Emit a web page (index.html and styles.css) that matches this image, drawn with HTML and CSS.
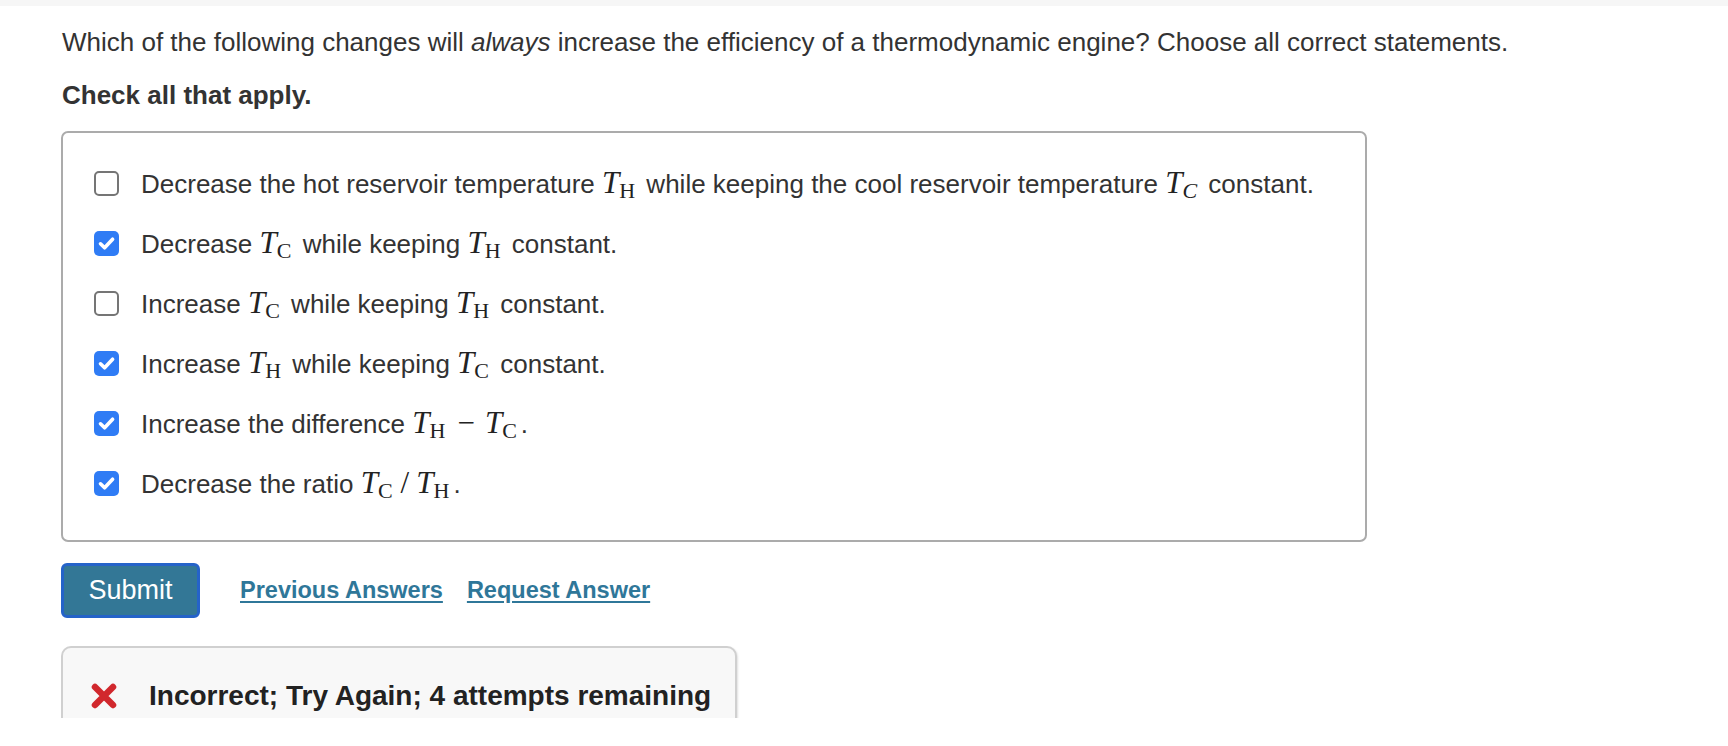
FILE: index.html
```html
<!DOCTYPE html>
<html lang="en">
<head>
<meta charset="utf-8">
<title>Thermodynamic engine efficiency</title>
<link rel="stylesheet" href="styles.css">
</head>
<body>
<div class="topbar"></div>
<main class="content">
  <p class="question">Which of the following changes will <em>always</em> increase the efficiency of a thermodynamic engine? Choose all correct statements.</p>
  <p class="instr">Check all that apply.</p>
  <div class="options">
    <label class="option">
      <span class="cb"></span>
      <span class="txt">Decrease the hot reservoir temperature <span class="m"><i>T</i><sub>H</sub></span> while keeping the cool reservoir temperature <span class="m"><i>T</i><sub><i>C</i></sub></span> constant.</span>
    </label>
    <label class="option">
      <span class="cb checked"><svg viewBox="0 0 25 25"><path d="M6.5 12.8 L10.6 16.8 L18.6 8.2"/></svg></span>
      <span class="txt">Decrease <span class="m"><i>T</i><sub>C</sub></span> while keeping <span class="m"><i>T</i><sub>H</sub></span> constant.</span>
    </label>
    <label class="option">
      <span class="cb"></span>
      <span class="txt">Increase <span class="m"><i>T</i><sub>C</sub></span> while keeping <span class="m"><i>T</i><sub>H</sub></span> constant.</span>
    </label>
    <label class="option">
      <span class="cb checked"><svg viewBox="0 0 25 25"><path d="M6.5 12.8 L10.6 16.8 L18.6 8.2"/></svg></span>
      <span class="txt">Increase <span class="m"><i>T</i><sub>H</sub></span> while keeping <span class="m"><i>T</i><sub>C</sub></span> constant.</span>
    </label>
    <label class="option">
      <span class="cb checked"><svg viewBox="0 0 25 25"><path d="M6.5 12.8 L10.6 16.8 L18.6 8.2"/></svg></span>
      <span class="txt">Increase the difference <span class="m"><i>T</i><sub>H</sub><span class="op">&minus;</span><i>T</i><sub>C</sub></span>.</span>
    </label>
    <label class="option">
      <span class="cb checked"><svg viewBox="0 0 25 25"><path d="M6.5 12.8 L10.6 16.8 L18.6 8.2"/></svg></span>
      <span class="txt">Decrease the ratio <span class="m"><i>T</i><sub>C</sub><span class="slash">/</span><i>T</i><sub>H</sub></span>.</span>
    </label>
  </div>
  <div class="actions">
    <button class="submit" type="button">Submit</button>
    <a class="link" href="#">Previous Answers</a>
    <a class="link" href="#">Request Answer</a>
  </div>
  <div class="feedback-clip">
    <div class="feedback">
      <svg class="xicon" viewBox="0 0 26 26"><path d="M4 4 L22 22 M22 4 L4 22"/></svg>
      <span class="fb-text">Incorrect; Try Again; 4 attempts remaining</span>
    </div>
  </div>
</main>
</body>
</html>
```

FILE: styles.css
```css
html, body {
  margin: 0;
  padding: 0;
  background: #ffffff;
}
body {
  font-family: "Liberation Sans", Arial, Helvetica, sans-serif;
  color: #333333;
}
.topbar {
  height: 6px;
  background: #f6f6f6;
}
.content {
  padding-left: 61px;
}
.question {
  margin: 20px 0 0 1px;
  font-size: 26px;
  line-height: 32px;
}
.question em {
  font-style: italic;
}
.instr {
  margin: 21px 0 0 1px;
  font-size: 26px;
  line-height: 32px;
  font-weight: bold;
}
.options {
  margin-top: 20px;
  width: 1306px;
  box-sizing: border-box;
  border: 2px solid #ababab;
  border-radius: 7px;
  padding: 35px 0 42px 31px;
  display: flex;
  flex-direction: column;
  gap: 30px;
}
.option {
  display: flex;
  align-items: center;
  height: 30px;
  font-size: 26px;
  line-height: 30px;
}
.cb {
  flex: none;
  width: 25px;
  height: 25px;
  box-sizing: border-box;
  border: 2px solid #757575;
  border-radius: 5px;
  background: #fff;
  margin-right: 22px;
  display: flex;
  align-items: center;
  justify-content: center;
}
.cb.checked {
  border: none;
  background: #2f7cf5;
}
.cb svg {
  width: 25px;
  height: 25px;
}
.cb path {
  fill: none;
  stroke: #fff;
  stroke-width: 3.6;
  stroke-linecap: round;
  stroke-linejoin: round;
}
.txt {
  white-space: nowrap;
}
.m {
  font-family: "Liberation Serif", "Times New Roman", serif;
  font-size: 31px;
  color: #222;
  white-space: nowrap;
  margin-right: 2px;
}
.m i {
  font-style: italic;
  padding-right: 2px;
}
.m sub {
  font-size: 22px;
  vertical-align: -5px;
  line-height: 0;
  margin-left: -2px;
  margin-right: 2px;
}
.m sub i {
  font-style: italic;
  padding-right: 0;
}
.op {
  margin: 0 10px;
}
.slash {
  margin: 0 7px 0 6px;
}
.actions {
  margin-top: 21px;
  display: flex;
  align-items: center;
}
.submit {
  width: 139px;
  height: 55px;
  box-sizing: border-box;
  background: #337796;
  border: 3px solid #2563c9;
  border-radius: 6px;
  color: #ffffff;
  font-family: "Liberation Sans", Arial, sans-serif;
  font-size: 27px;
  padding: 0;
  margin-right: 40px;
}
.link {
  font-size: 23.5px;
  font-weight: bold;
  color: #2f7799;
  text-decoration: underline;
  text-underline-offset: 3px;
  text-decoration-thickness: 2px;
  margin-right: 24px;
}
.feedback-clip {
  margin-top: 28px;
  height: 72px;
  overflow: hidden;
  width: 690px;
}
.feedback {
  width: 676px;
  height: 120px;
  box-sizing: border-box;
  background: #f8f8f8;
  border: 2px solid #d0d0d0;
  border-radius: 10px;
  box-shadow: 1px 1px 2px rgba(0,0,0,0.12);
  padding: 33px 0 0 28px;
  display: flex;
  align-items: flex-start;
}
.xicon {
  width: 26px;
  height: 26px;
  flex: none;
  margin-top: 2px;
  margin-right: 32px;
}
.xicon path {
  stroke: #d1282d;
  stroke-width: 6.5;
  stroke-linecap: round;
  fill: none;
}
.fb-text {
  font-size: 28px;
  line-height: 30px;
  font-weight: bold;
  color: #222;
}
```
